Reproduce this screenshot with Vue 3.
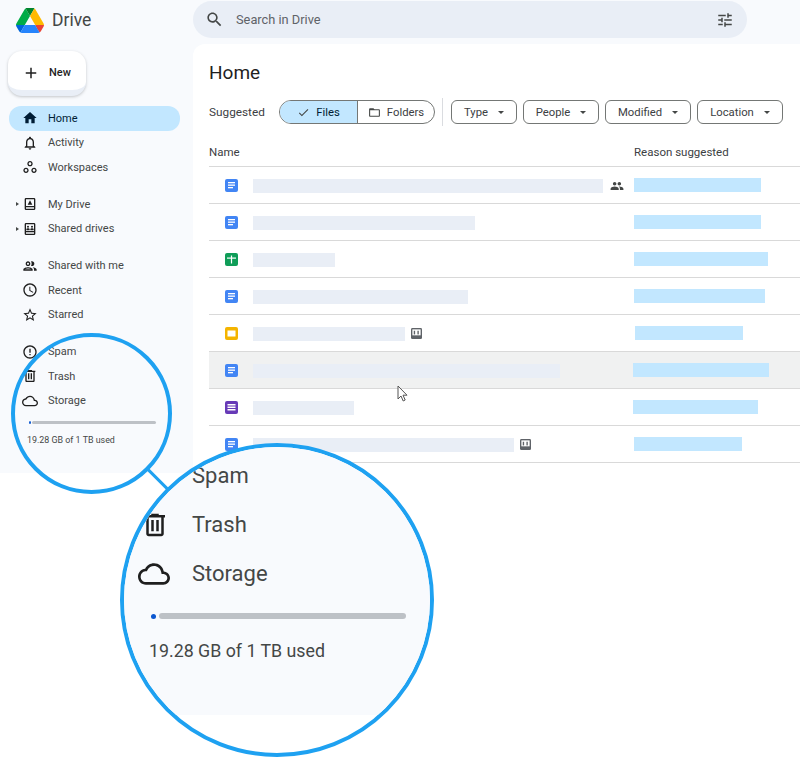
<template>
  <div class="page">
    <div class="frame">
      <aside class="sidebar">
        <div class="logo-row">
          <svg class="logo" viewBox="0 0 87.3 78">
            <path d="m6.6 66.85 3.85 6.65c.8 1.4 1.95 2.5 3.3 3.3l13.75-23.8h-27.5c0 1.55.4 3.1 1.2 4.5z" fill="#0066da" />
            <path d="m43.65 25-13.75-23.8c-1.35.8-2.5 1.9-3.3 3.3l-25.4 44a9.06 9.06 0 0 0 -1.2 4.5h27.5z" fill="#00ac47" />
            <path d="m73.55 76.8c1.35-.8 2.5-1.9 3.3-3.3l1.6-2.75 7.65-13.25c.8-1.4 1.2-2.95 1.2-4.5h-27.502l5.852 11.5z" fill="#ea4335" />
            <path d="m43.65 25 13.75-23.8c-1.35-.8-2.9-1.2-4.5-1.2h-18.5c-1.6 0-3.15.45-4.5 1.2z" fill="#00832d" />
            <path d="m59.8 53h-32.3l-13.75 23.8c1.35.8 2.9 1.2 4.5 1.2h50.8c1.6 0 3.15-.45 4.5-1.2z" fill="#2684fc" />
            <path d="m73.4 26.5-12.7-22c-.8-1.4-1.95-2.5-3.3-3.3l-13.75 23.8 16.15 28h27.45c0-1.55-.4-3.1-1.2-4.5z" fill="#ffba00" />
          </svg>
          <span class="logo-text">Drive</span>
        </div>

        <button class="new-btn">
          <svg class="new-plus" viewBox="0 0 24 24"><path :d="ICONS.plus" /></svg>
          <span>New</span>
        </button>

        <nav class="nav">
          <div v-for="(group, i) in navGroups" :key="i" class="nav-group">
            <div
              v-for="item in group"
              :key="item.label"
              class="nav-item"
              :class="{ active: item.active }"
            >
              <span v-if="item.caret" class="caret"></span>
              <svg class="nav-icon" viewBox="0 0 24 24"><path fill-rule="evenodd" :d="ICONS[item.icon]" /></svg>
              <span>{{ item.label }}</span>
            </div>
          </div>
        </nav>

        <div class="quota">
          <div class="quota-bar"><i class="quota-dot"></i><i class="quota-track"></i></div>
          <div class="quota-text">19.28 GB of 1 TB used</div>
        </div>
      </aside>

      <div class="main">
        <div class="search">
          <svg class="search-icon" viewBox="0 0 24 24"><path :d="ICONS.search" /></svg>
          <span class="search-text">Search in Drive</span>
          <svg class="tune-icon" viewBox="0 0 24 24"><path :d="ICONS.tune" /></svg>
        </div>

        <section class="content">
          <h1 class="title">Home</h1>

          <div class="filters">
            <span class="suggested">Suggested</span>
            <div class="segments">
              <div class="segment selected">
                <svg viewBox="0 0 24 24"><path :d="ICONS.check" /></svg>
                <span>Files</span>
              </div>
              <div class="segment">
                <svg viewBox="0 0 24 24"><path :d="ICONS.folder" /></svg>
                <span>Folders</span>
              </div>
            </div>
            <span class="divider"></span>
            <div class="chips">
              <div v-for="chip in chips" :key="chip.label" class="chip" :style="{ width: chip.width + 'px' }">
                <span>{{ chip.label }}</span>
                <i class="chip-arrow"></i>
              </div>
            </div>
          </div>

          <div class="table-head">
            <span>Name</span>
            <span>Reason suggested</span>
          </div>

          <div
            v-for="(row, i) in rows"
            :key="i"
            class="row"
            :class="{ hover: row.hover }"
          >
            <div class="name-cell">
              <svg class="file-icon" viewBox="0 0 13 13">
                <rect width="13" height="13" rx="2" :fill="FILE_TYPES[row.type].color" />
                <rect
                  v-for="(r, j) in FILE_TYPES[row.type].marks"
                  :key="j"
                  :x="r[0]"
                  :y="r[1]"
                  :width="r[2]"
                  :height="r[3]"
                  fill="#fff"
                />
              </svg>
              <span class="name-bar" :style="{ width: row.name + 'px' }"></span>
              <svg v-if="row.badge === 'people'" class="people-badge" viewBox="0 0 24 24"><path :d="ICONS.peopleFilled" /></svg>
              <svg v-if="row.badge === 'shared'" class="shared-badge" viewBox="0 0 12 12">
                <rect width="12" height="12" rx="1.5" fill="#5f6368" />
                <rect x="1.5" y="1.5" width="9" height="6.5" fill="#fff" />
                <rect x="3" y="3" width="1.5" height="4" fill="#5f6368" />
                <rect x="7" y="3" width="1.5" height="4" fill="#5f6368" />
              </svg>
            </div>
            <span class="reason-bar" :style="{ width: row.reason + 'px', marginLeft: row.shift + 'px' }"></span>
          </div>
        </section>
      </div>
    </div>

    <!-- курсор -->
    <svg class="cursor" viewBox="0 0 11 17">
      <path d="M1 1v13l3-3 2.2 5 2-1-2.2-4.800h4z" fill="#fff" stroke="#555" stroke-width="1" />
    </svg>

    <!-- лупа -->
    <div class="ring-small"></div>
    <div class="ring-stem"></div>
    <div class="ring-big">
      <div class="zoom-panel">
        <div class="zoom-item"><span>Spam</span></div>
        <div class="zoom-item">
          <svg class="zoom-trash" viewBox="0 0 24 24"><path :d="ICONS.trash" /></svg>
          <span>Trash</span>
        </div>
        <div class="zoom-item">
          <svg class="zoom-cloud" viewBox="0 0 24 24"><path :d="ICONS.cloud" /></svg>
          <span>Storage</span>
        </div>
        <div class="zoom-bar"><i class="zoom-dot"></i><i class="zoom-track"></i></div>
        <div class="zoom-text">19.28 GB of 1 TB used</div>
      </div>
    </div>
  </div>
</template>

<script setup>
const ICONS = {
  plus: 'M19 13h-6v6h-2v-6H5v-2h6V5h2v6h6v2z',
  home: 'M10 20v-6h4v6h5v-8h3L12 3 2 12h3v8z',
  bell: 'M12 22c1.1 0 2-.9 2-2h-4c0 1.1.9 2 2 2zm6-6v-5c0-3.07-1.63-5.64-4.5-6.32V4c0-.83-.67-1.5-1.5-1.5s-1.5.67-1.5 1.5v.68C7.64 5.36 6 7.92 6 11v5l-2 2v1h16v-1l-2-2zm-2 1H8v-6c0-2.48 1.51-4.5 4-4.5s4 2.02 4 4.5v6z',
  workspaces: 'M6 15c1.1 0 2 .9 2 2s-.9 2-2 2-2-.9-2-2 .9-2 2-2m0-2c-2.2 0-4 1.8-4 4s1.8 4 4 4 4-1.8 4-4-1.8-4-4-4zm6-8c1.1 0 2 .9 2 2s-.9 2-2 2-2-.9-2-2 .9-2 2-2m0-2C9.8 3 8 4.8 8 7s1.8 4 4 4 4-1.8 4-4-1.8-4-4-4zm6 12c1.1 0 2 .9 2 2s-.9 2-2 2-2-.9-2-2 .9-2 2-2m0-2c-2.2 0-4 1.8-4 4s1.8 4 4 4 4-1.8 4-4-1.8-4-4-4z',
  myDrive: 'M6 3h12a2 2 0 0 1 2 2v14a2 2 0 0 1-2 2H6a2 2 0 0 1-2-2V5a2 2 0 0 1 2-2zm0 2v10h12V5H6zm0 12v2h12v-2H6zM12 6.500l3.500 6.500h-7z',
  sharedDrives: 'M6 3h12a2 2 0 0 1 2 2v14a2 2 0 0 1-2 2H6a2 2 0 0 1-2-2V5a2 2 0 0 1 2-2zm0 2v10h12V5H6zm0 12v2h12v-2H6zM9 7a1.500 1.500 0 1 1 0 3 1.500 1.500 0 0 1 0-3zm6 0a1.500 1.500 0 1 1 0 3 1.500 1.500 0 0 1 0-3zM6.500 14v-1.500c0-1 1.500-1.500 2.500-1.500s2.500.5 2.500 1.500V14zm6 0v-1.500c0-1 1.500-1.500 2.500-1.500s2.500.5 2.500 1.500V14z',
  shared: 'M9 13.750c-2.340 0-7 1.170-7 3.500V19h14v-1.750c0-2.330-4.660-3.500-7-3.500zM4.340 17c.84-.58 2.870-1.250 4.660-1.250s3.820.67 4.660 1.250H4.340zM9 12c1.930 0 3.500-1.570 3.500-3.500S10.930 5 9 5 5.500 6.570 5.500 8.500 7.070 12 9 12zm0-5c.83 0 1.500.67 1.500 1.500S9.830 10 9 10s-1.500-.67-1.500-1.500S8.170 7 9 7zm7.040 6.810c1.160.84 1.960 1.960 1.960 3.440V19h4v-1.750c0-2.020-3.500-3.170-5.960-3.440zM15 12c1.930 0 3.500-1.570 3.500-3.500S16.930 5 15 5c-.54 0-1.040.13-1.500.35.63.89 1 1.980 1 3.150s-.37 2.260-1 3.150c.46.22.96.35 1.500.35z',
  peopleFilled: 'M16 11c1.660 0 2.990-1.340 2.990-3S17.660 5 16 5c-1.660 0-3 1.340-3 3s1.340 3 3 3zm-8 0c1.660 0 2.990-1.340 2.990-3S9.660 5 8 5C6.340 5 5 6.340 5 8s1.340 3 3 3zm0 2c-2.330 0-7 1.170-7 3.500V19h14v-2.500c0-2.330-4.670-3.500-7-3.500zm8 0c-.29 0-.62.02-.97.05 1.160.84 1.970 1.970 1.970 3.450V19h6v-2.500c0-2.330-4.670-3.500-7-3.500z',
  clock: 'M11.990 2C6.470 2 2 6.480 2 12s4.470 10 9.990 10C17.520 22 22 17.520 22 12S17.520 2 11.990 2zM12 20c-4.420 0-8-3.580-8-8s3.580-8 8-8 8 3.580 8 8-3.580 8-8 8zm.5-13H11v6l5.250 3.150.75-1.230-4.500-2.670z',
  star: 'M22 9.240l-7.190-.62L12 2 9.190 8.630 2 9.240l5.460 4.730L5.820 21 12 17.270 18.180 21l-1.630-7.030L22 9.240zM12 15.400l-3.760 2.270 1-4.280-3.320-2.880 4.380-.38L12 6.100l1.710 4.040 4.380.38-3.320 2.880 1 4.280L12 15.400z',
  spam: 'M11 15h2v2h-2zm0-8h2v6h-2zm.99-5C6.470 2 2 6.480 2 12s4.470 10 9.990 10C17.520 22 22 17.520 22 12S17.520 2 11.990 2zM12 20c-4.420 0-8-3.580-8-8s3.580-8 8-8 8 3.580 8 8-3.580 8-8 8z',
  trash: 'M15 4V3H9v1H4v2h1v13c0 1.100.9 2 2 2h10c1.100 0 2-.9 2-2V6h1V4h-5zm2 15H7V6h10v13zM9 8h2v9H9zm4 0h2v9h-2z',
  cloud: 'M19.350 10.040C18.670 6.590 15.640 4 12 4 9.110 4 6.600 5.640 5.350 8.040 2.340 8.360 0 10.910 0 14c0 3.310 2.690 6 6 6h13c2.760 0 5-2.240 5-5 0-2.640-2.050-4.780-4.650-4.960zM19 18H6c-2.210 0-4-1.790-4-4 0-2.050 1.530-3.760 3.560-3.970l1.070-.11.5-.95C8.080 7.140 9.940 6 12 6c2.620 0 4.880 1.860 5.390 4.430l.3 1.500 1.530.11c1.560.1 2.780 1.410 2.780 2.960 0 1.650-1.350 3-3 3z',
  search: 'M15.500 14h-.79l-.28-.27C15.410 12.590 16 11.110 16 9.500 16 5.910 13.090 3 9.500 3S3 5.910 3 9.500 5.910 16 9.500 16c1.610 0 3.090-.59 4.230-1.570l.27.28v.79l5 4.990L20.490 19l-4.990-5zm-6 0C7.010 14 5 11.990 5 9.500S7.010 5 9.500 5 14 7.010 14 9.500 11.990 14 9.500 14z',
  tune: 'M3 17v2h6v-2H3zM3 5v2h10V5H3zm10 16v-2h8v-2h-8v-2h-2v6h2zM7 9v2H3v2h4v2h2V9H7zm14 4v-2H11v2h10zm-6-4h2V7h4V5h-4V3h-2v6z',
  check: 'M9 16.170L4.830 12l-1.420 1.410L9 19 21 7l-1.410-1.410z',
  folder: 'M20 6h-8l-2-2H4c-1.100 0-1.990.9-1.990 2L2 18c0 1.100.9 2 2 2h16c1.100 0 2-.9 2-2V8c0-1.100-.9-2-2-2zm0 12H4V8h16v10z',
};

const navGroups = [
  [
    { label: 'Home', icon: 'home', active: true },
    { label: 'Activity', icon: 'bell' },
    { label: 'Workspaces', icon: 'workspaces' },
  ],
  [
    { label: 'My Drive', icon: 'myDrive', caret: true },
    { label: 'Shared drives', icon: 'sharedDrives', caret: true },
  ],
  [
    { label: 'Shared with me', icon: 'shared' },
    { label: 'Recent', icon: 'clock' },
    { label: 'Starred', icon: 'star' },
  ],
  [
    { label: 'Spam', icon: 'spam' },
    { label: 'Trash', icon: 'trash' },
    { label: 'Storage', icon: 'cloud' },
  ],
];

const chips = [
  { label: 'Type', width: 66 },
  { label: 'People', width: 76 },
  { label: 'Modified', width: 86 },
  { label: 'Location', width: 86 },
];

const FILE_TYPES = {
  doc: { color: '#4285f4', marks: [[3, 3, 7, 1.3], [3, 5.500, 7, 1.3], [3, 8, 5, 1.3]] },
  sheet: { color: '#0f9d58', marks: [[2, 4.500, 9, 1.2], [5.900, 2.500, 1.200, 8]] },
  slide: { color: '#f4b400', marks: [[2.500, 3.500, 8, 6]] },
  form: { color: '#673ab7', marks: [[2.500, 3, 8, 1.500], [2.500, 5.500, 8, 1.500], [2.500, 8, 8, 1.500]] },
};

const rows = [
  { type: 'doc', name: 350, badge: 'people', reason: 127, shift: 0 },
  { type: 'doc', name: 222, reason: 127, shift: 0 },
  { type: 'sheet', name: 82, reason: 134, shift: 0 },
  { type: 'doc', name: 215, reason: 131, shift: 0 },
  { type: 'slide', name: 152, badge: 'shared', reason: 108, shift: 1 },
  { type: 'doc', name: 307, reason: 136, shift: -1, hover: true },
  { type: 'form', name: 101, reason: 125, shift: -1 },
  { type: 'doc', name: 261, badge: 'shared', reason: 108, shift: 0 },
];
</script>

<style>
html,
body {
  margin: 0;
  background: #fff;
}
</style>

<style scoped>
.page {
  position: relative;
  width: 800px;
  height: 757px;
  overflow: hidden;
  font-family: Roboto, "Liberation Sans", sans-serif;
  color: #444746;
}

.frame {
  display: grid;
  grid-template-columns: 193px 1fr;
  height: 473px;
  background: #f8fafd;
}

/* sidebar */
.sidebar {
  min-width: 0;
}

.logo-row {
  display: flex;
  align-items: center;
  height: 40px;
  padding-left: 16px;
  gap: 8px;
}

.logo {
  width: 28px;
  height: 25px;
}

.logo-text {
  font-size: 17.500px;
  color: #444746;
}

.new-btn {
  display: flex;
  align-items: center;
  gap: 9px;
  box-sizing: border-box;
  width: 78px;
  height: 45px;
  margin: 11px 0 0 8px;
  padding: 4px 0 0 14px;
  border: none;
  border-bottom: 6px solid #e9eef6;
  border-radius: 14px;
  background: #fff;
  box-shadow: 0 1px 3px rgba(60, 64, 67, 0.28);
  font-family: inherit;
  font-size: 11px;
  font-weight: 500;
  color: #1f1f1f;
}

.new-plus {
  width: 18px;
  height: 18px;
  fill: #1f1f1f;
}

.nav {
  margin-top: 10px;
}

.nav-group {
  margin-bottom: 12.500px;
}

.nav-item {
  position: relative;
  display: flex;
  align-items: center;
  gap: 10px;
  box-sizing: border-box;
  width: 171px;
  height: 24.500px;
  margin-left: 9px;
  padding-left: 13px;
  border-radius: 12px;
  font-size: 11px;
}

.nav-item.active {
  background: #c2e7ff;
  color: #001d35;
}

.nav-icon {
  width: 16px;
  height: 16px;
  flex-shrink: 0;
  fill: #1f1f1f;
}

.active .nav-icon {
  fill: #001d35;
}

.caret {
  position: absolute;
  left: 7px;
  top: 10px;
  border-left: 3px solid #444746;
  border-top: 2.500px solid transparent;
  border-bottom: 2.500px solid transparent;
}

.quota {
  margin-top: -5px;
  padding-left: 27px;
}

.quota-bar {
  display: flex;
  align-items: center;
  gap: 1px;
  width: 129px;
  height: 4px;
}

.quota-dot {
  width: 2px;
  height: 3px;
  margin-left: 2px;
  border-radius: 50%;
  background: #0b57d0;
}

.quota-track {
  flex: 1;
  height: 3px;
  border-radius: 2px;
  background: #bdc1c6;
}

.quota-text {
  margin-top: 9px;
  font-size: 8.900px;
  line-height: 12px;
}

/* main */
.main {
  display: flex;
  flex-direction: column;
  min-width: 0;
}

.search {
  display: flex;
  align-items: center;
  flex-shrink: 0;
  box-sizing: border-box;
  width: 554px;
  height: 37px;
  margin-top: 1px;
  padding: 0 13px 0 12px;
  border-radius: 19px;
  background: #e9eef6;
}

.search-icon {
  width: 19px;
  height: 19px;
  fill: #444746;
}

.search-text {
  flex: 1;
  margin-left: 12px;
  font-size: 12.800px;
  color: #5f6368;
}

.tune-icon {
  width: 18px;
  height: 18px;
  fill: #444746;
}

.content {
  flex: 1;
  margin-top: 6px;
  padding: 17px 0 0 16px;
  border-radius: 12px 0 0 0;
  background: #fff;
}

.title {
  margin: 0;
  font-size: 19px;
  font-weight: 400;
  line-height: 24px;
  color: #1f1f1f;
}

.filters {
  display: flex;
  align-items: center;
  height: 24px;
  margin-top: 15px;
}

.suggested {
  width: 70px;
  font-size: 11.800px;
  color: #3c4043;
}

.segments {
  display: flex;
  box-sizing: border-box;
  width: 156px;
  height: 24px;
  border: 1px solid #747775;
  border-radius: 12px;
  overflow: hidden;
}

.segment {
  display: flex;
  align-items: center;
  justify-content: center;
  gap: 6px;
  flex: 1;
  font-size: 11.300px;
  color: #3c4043;
}

.segment.selected {
  flex: 0 0 77px;
  border-right: 1px solid #747775;
  background: #c2e7ff;
  color: #001d35;
}

.segment svg {
  width: 13px;
  height: 13px;
  fill: #444746;
}

.divider {
  width: 1px;
  height: 28px;
  margin: 0 8px 0 7px;
  background: #dadce0;
}

.chips {
  display: flex;
  gap: 6px;
}

.chip {
  display: flex;
  align-items: center;
  justify-content: center;
  gap: 10px;
  box-sizing: border-box;
  height: 24px;
  border: 1px solid #747775;
  border-radius: 6px;
  font-size: 11.300px;
  color: #3c4043;
}

.chip-arrow {
  border-top: 3px solid #444746;
  border-left: 3px solid transparent;
  border-right: 3px solid transparent;
}

.table-head {
  display: grid;
  grid-template-columns: 425px 1fr;
  align-items: center;
  height: 29px;
  margin-top: 14px;
  border-bottom: 1px solid #d9d9d9;
  box-sizing: border-box;
  font-size: 11.500px;
  color: #3c4043;
}

.row {
  display: grid;
  grid-template-columns: 425px 1fr;
  align-items: center;
  box-sizing: border-box;
  height: 37px;
  border-bottom: 1px solid #d9d9d9;
}

.row.hover {
  background: #f0f1f1;
}

.name-cell {
  display: flex;
  align-items: center;
  padding: 1px 0 0 16px;
}

.file-icon {
  width: 13px;
  height: 13px;
  flex-shrink: 0;
  margin-right: 15px;
}

.name-bar {
  height: 14px;
  background: #e9eef6;
}

.people-badge {
  width: 14px;
  height: 14px;
  margin-left: 7px;
  fill: #444746;
}

.shared-badge {
  width: 11px;
  height: 11px;
  margin-left: 6px;
}

.reason-bar {
  display: block;
  height: 14px;
  background: #c2e7ff;
}

.cursor {
  position: absolute;
  left: 397px;
  top: 385px;
  width: 11px;
  height: 17px;
}

/* лупа */
.ring-small {
  position: absolute;
  left: 11px;
  top: 333px;
  box-sizing: border-box;
  width: 161px;
  height: 161px;
  border: 4px solid #1ea1f1;
  border-radius: 50%;
}

.ring-stem {
  position: absolute;
  left: 144px;
  top: 478px;
  width: 28px;
  height: 3px;
  background: #1ea1f1;
  transform: rotate(45deg);
}

.ring-big {
  position: absolute;
  left: 120px;
  top: 443px;
  box-sizing: border-box;
  width: 314px;
  height: 314px;
  border: 4px solid #1ea1f1;
  border-radius: 50%;
  background: #fff;
  overflow: hidden;
}

.zoom-panel {
  box-sizing: border-box;
  height: 268px;
  padding: 4px 0 0 25px;
  background: #f8fafd;
}

.zoom-item {
  position: relative;
  display: flex;
  align-items: center;
  height: 49px;
  padding-left: 43px;
  font-size: 22px;
}

.zoom-trash {
  position: absolute;
  left: -9px;
  width: 30px;
  height: 30px;
  fill: #1f1f1f;
}

.zoom-cloud {
  position: absolute;
  left: -11px;
  width: 32px;
  height: 32px;
  fill: #1f1f1f;
}

.zoom-bar {
  display: flex;
  align-items: center;
  gap: 3px;
  width: 255px;
  height: 6px;
  margin-top: 15px;
  padding-left: 2px;
}

.zoom-dot {
  width: 5px;
  height: 5px;
  border-radius: 50%;
  background: #0b57d0;
}

.zoom-track {
  flex: 1;
  height: 6px;
  border-radius: 3px;
  background: #bdc1c6;
}

.zoom-text {
  margin-top: 21px;
  font-size: 17.800px;
  line-height: 22px;
}
</style>
